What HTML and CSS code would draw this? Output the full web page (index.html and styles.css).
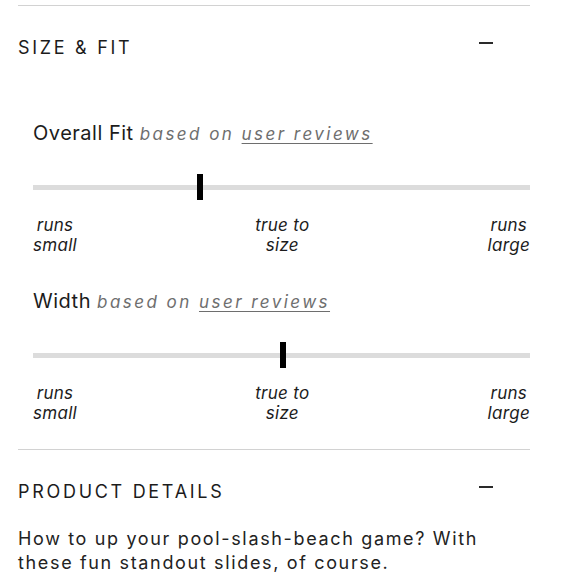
FILE: index.html
```html
<!DOCTYPE html>
<html>
<head>
<meta charset="utf-8">
<link rel="stylesheet" href="styles.css">
</head>
<body>
<div class="page">
  <section class="acc">
    <div class="acc-head">
      <h2 class="acc-title">SIZE &amp; FIT</h2>
      <span class="minus"></span>
    </div>
    <div class="fit">
      <div class="fit-title"><span class="fit-name">Overall Fit</span> <span class="fit-src">based on <a class="fit-link">user reviews</a></span></div>
      <div class="track"><span class="marker" style="left:33.7%"></span></div>
      <div class="labels">
        <span class="lbl">runs<br>small</span>
        <span class="lbl">true to<br>size</span>
        <span class="lbl">runs<br>large</span>
      </div>
    </div>
    <div class="fit">
      <div class="fit-title"><span class="fit-name">Width</span> <span class="fit-src">based on <a class="fit-link">user reviews</a></span></div>
      <div class="track"><span class="marker" style="left:50.3%"></span></div>
      <div class="labels">
        <span class="lbl">runs<br>small</span>
        <span class="lbl">true to<br>size</span>
        <span class="lbl">runs<br>large</span>
      </div>
    </div>
  </section>
  <section class="acc">
    <div class="acc-head">
      <h2 class="acc-title">PRODUCT DETAILS</h2>
      <span class="minus"></span>
    </div>
    <p class="desc">How to up your pool-slash-beach game? With these fun standout slides, of course.</p>
  </section>
</div>
</body>
</html>
```

FILE: styles.css
```css
html, body {
  margin: 0;
  padding: 0;
  background: #fff;
}
body {
  font-family: Inter, Lato, "Noto Sans", sans-serif;
  color: #1c1c1c;
}
.page {
  padding: 5px 50px 0 18px;
}
.acc {
  border-top: 1px solid #d2d2d2;
  padding-bottom: 26px;
}
.acc-head {
  display: flex;
  justify-content: space-between;
  align-items: flex-start;
  padding-top: 30px;
}
.acc-title {
  margin: 0;
  font-size: 18px;
  line-height: 24px;
  font-weight: 400;
  letter-spacing: 2.7px;
}
.minus {
  width: 14px;
  height: 2px;
  background: #2a2a2a;
  margin-top: 6px;
  margin-right: 37px;
}
.fit {
  padding-left: 15px;
  margin-top: 61px;
}
.fit + .fit {
  margin-top: 34px;
}
.fit-title {
  font-size: 20px;
  line-height: 24px;
  letter-spacing: 0.5px;
}
.fit-src {
  font-style: italic;
  font-size: 17px;
  color: #6e6e6e;
  letter-spacing: 2.45px;
}
.fit-link {
  text-decoration: underline;
  text-underline-offset: 3px;
  text-decoration-thickness: 1px;
}
.track {
  position: relative;
  height: 5px;
  background: #dcdcdc;
  margin-top: 39px;
}
.marker {
  position: absolute;
  top: -11px;
  width: 6px;
  height: 26px;
  margin-left: -3px;
  background: #000;
}
.labels {
  display: flex;
  justify-content: space-between;
  margin-top: 25px;
}
.lbl {
  font-style: italic;
  font-size: 17px;
  line-height: 20px;
  text-align: center;
  letter-spacing: 0.3px;
}
.desc {
  margin: 23px 0 0;
  font-size: 18px;
  line-height: 24px;
  letter-spacing: 1.65px;
  color: #222;
}
```
